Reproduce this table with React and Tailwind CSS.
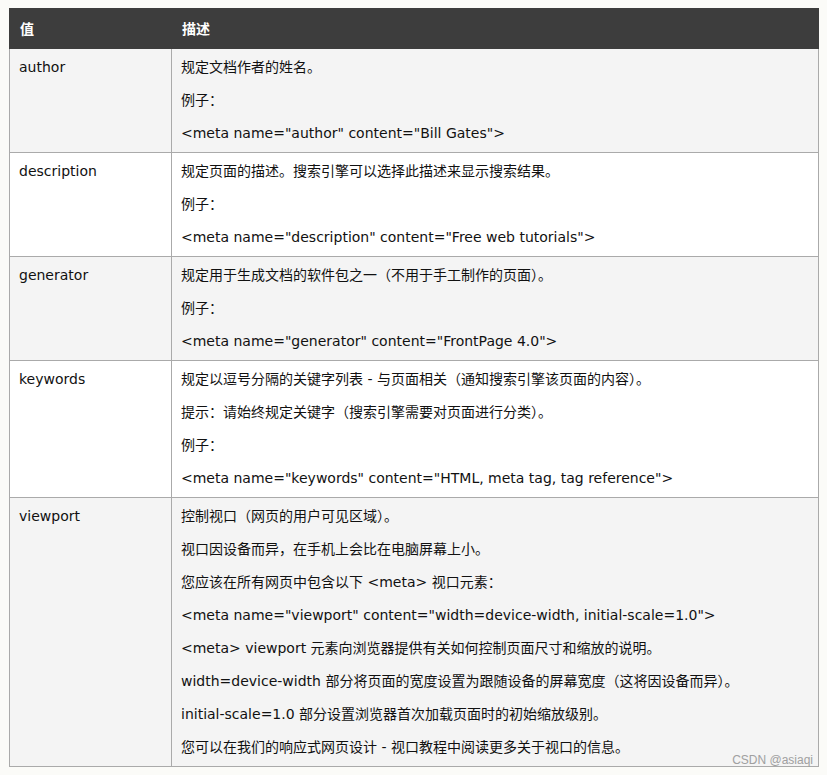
import React from "react";

const rows = [
  {
    k: "author",
    lines: ["规定文档作者的姓名。", "例子：", '<meta name="author" content="Bill Gates">'],
  },
  {
    k: "description",
    lines: [
      "规定页面的描述。搜索引擎可以选择此描述来显示搜索结果。",
      "例子：",
      '<meta name="description" content="Free web tutorials">',
    ],
  },
  {
    k: "generator",
    lines: [
      "规定用于生成文档的软件包之一（不用于手工制作的页面）。",
      "例子：",
      '<meta name="generator" content="FrontPage 4.0">',
    ],
  },
  {
    k: "keywords",
    lines: [
      "规定以逗号分隔的关键字列表 - 与页面相关（通知搜索引擎该页面的内容）。",
      "提示：请始终规定关键字（搜索引擎需要对页面进行分类）。",
      "例子：",
      '<meta name="keywords" content="HTML, meta tag, tag reference">',
    ],
  },
  {
    k: "viewport",
    lines: [
      "控制视口（网页的用户可见区域）。",
      "视口因设备而异，在手机上会比在电脑屏幕上小。",
      "您应该在所有网页中包含以下 <meta> 视口元素：",
      '<meta name="viewport" content="width=device-width, initial-scale=1.0">',
      "<meta> viewport 元素向浏览器提供有关如何控制页面尺寸和缩放的说明。",
      "width=device-width 部分将页面的宽度设置为跟随设备的屏幕宽度（这将因设备而异）。",
      "initial-scale=1.0 部分设置浏览器首次加载页面时的初始缩放级别。",
      "您可以在我们的响应式网页设计 - 视口教程中阅读更多关于视口的信息。",
    ],
  },
];

export default function App() {
  return (
    <div
      className="min-h-[775px] w-[827px] bg-[#fbfbf8] pt-[8px] pl-[9px] text-[14px] text-[#111]"
      style={{ fontFamily: '"DejaVu Sans", "Noto Sans CJK SC", sans-serif' }}
    >
      <div className="relative w-[810px]">
        <table className="w-[810px] border-collapse table-fixed">
          <colgroup>
            <col className="w-[162px]" />
            <col />
          </colgroup>
          <thead>
            <tr className="bg-[#3d3d3d] text-white">
              <th className="h-[40px] border border-[#3d3d3d] pl-[10px] text-left font-bold leading-[20px]">值</th>
              <th className="h-[40px] border border-[#3d3d3d] pl-[10px] text-left font-bold leading-[20px]">描述</th>
            </tr>
          </thead>
          <tbody>
            {rows.map((r, i) => (
              <tr key={r.k} className={i % 2 === 0 ? "bg-[#f4f4f4]" : "bg-white"}>
                <td className="border border-[#aaaaaa] px-[9px] pt-[8px] pb-[8px] align-top leading-[21px]">
                  {r.k}
                </td>
                <td className="border border-[#aaaaaa] px-[9px] pt-[8px] pb-[8px] align-top">
                  <div className="flex flex-col gap-[12px]">
                    {r.lines.map((l, j) => (
                      <p key={j} className="leading-[21px] whitespace-nowrap">
                        {l}
                      </p>
                    ))}
                  </div>
                </td>
              </tr>
            ))}
          </tbody>
        </table>
        <div
          className="absolute right-[6px] bottom-[1px] text-[12px] leading-[12px] text-[#a0a0a0]"
          style={{ fontFamily: '"Liberation Sans", sans-serif' }}
        >
          CSDN @asiaqi
        </div>
      </div>
    </div>
  );
}
